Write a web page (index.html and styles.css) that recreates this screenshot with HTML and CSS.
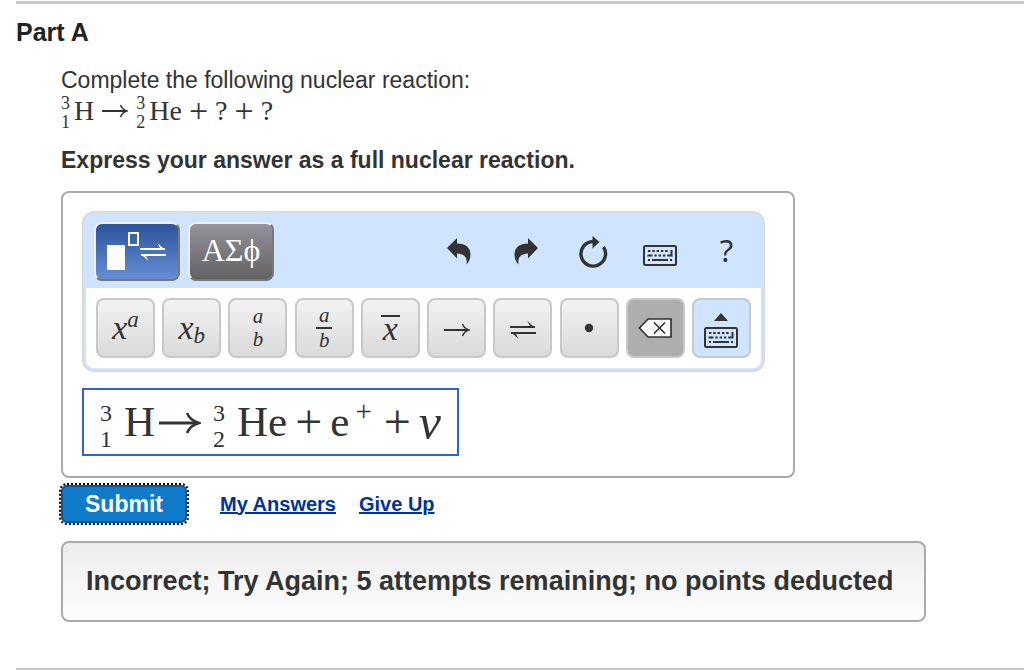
FILE: index.html
```html
<!DOCTYPE html>
<html lang="en">

<head>
  <meta charset="utf-8">
  <title>Part A</title>
  <link rel="stylesheet" href="styles.css">
</head>

<body>
  <svg class="defs" aria-hidden="true">
    <symbol id="keyboard" viewBox="0 0 34 21">
      <rect x="1" y="1" width="32" height="19" rx="1.5" fill="none" stroke="currentColor" stroke-width="2" />
      <path d="M5 6h21M7 10.500h18" stroke="currentColor" stroke-width="2" stroke-dasharray="2.4 1.9" />
      <path d="M5 15h2M9 15h16M27 15h2M4.500 10.500h3M25 10.500h3.500V5" fill="none" stroke="currentColor" stroke-width="2" />
    </symbol>
    <symbol id="equilibrium" viewBox="0 0 26 18">
      <path d="M0 6h25M1 12h25" stroke="currentColor" stroke-width="2" />
      <path d="M17.500 0l7.500 7h-4zM8.500 18l-7.500-7h4z" fill="currentColor" />
    </symbol>
    <symbol id="arrow" viewBox="0 0 26 14">
      <path d="M0 7h24" stroke="currentColor" stroke-width="2" />
      <path d="M18.500 1q1.500 4.500 6.500 6q-5 1.500-6.500 6" fill="none" stroke="currentColor" stroke-width="1.500" />
    </symbol>
    <symbol id="undo" viewBox="0 0 24 27">
      <path d="M0 10L10 0v5.500c9 0 13.500 4.500 13.500 11c0 4-1.500 7.500-4 10c1-7-2-10.500-9.500-11v5z" fill="currentColor" />
    </symbol>
  </svg>

  <main class="part">
    <h1>Part A</h1>
    <div class="content">
      <p class="question">Complete the following nuclear reaction:</p>
      <div class="equation">
        <span class="scripts"><span>3</span><span>1</span></span>
        <span>H</span>
        <svg class="arrow"><use href="#arrow" /></svg>
        <span class="scripts"><span>3</span><span>2</span></span>
        <span>He</span>
        <span class="op">+</span>
        <span>?</span>
        <span class="op">+</span>
        <span>?</span>
      </div>
      <p class="instructions">Express your answer as a full nuclear reaction.</p>

      <form>
        <div class="editor">
          <div class="toolbar">
            <div class="toolbar-top">
              <div class="tabs">
                <button type="button" class="tab active" aria-label="Templates">
                  <svg width="60" height="40" viewBox="0 0 60 40">
                    <path d="M0 14h18v25H0z" fill="#fff" />
                    <path d="M22 2h9v12h-9z" fill="none" stroke="#fff" stroke-width="2" />
                    <use href="#equilibrium" x="33" y="12" width="26" height="18" />
                  </svg>
                </button>
                <button type="button" class="tab">ΑΣϕ</button>
              </div>
              <div class="tools">
                <button type="button" class="tool" aria-label="Undo"><svg width="24" height="27"><use href="#undo" /></svg></button>
                <button type="button" class="tool" aria-label="Redo"><svg class="flip" width="24" height="27"><use href="#undo" /></svg></button>
                <button type="button" class="tool" aria-label="Reset">
                  <svg width="30" height="34" viewBox="0 0 30 34">
                    <path d="M15 6.500A12.300 12.300 0 1 0 25.500 12" fill="none" stroke="currentColor" stroke-width="3.400" />
                    <path d="M14.500 1l7 6l-7 6.500z" fill="currentColor" />
                  </svg>
                </button>
                <button type="button" class="tool low" aria-label="Keyboard shortcuts"><svg width="34" height="21"><use href="#keyboard" /></svg></button>
                <button type="button" class="tool help">?</button>
              </div>
            </div>
            <div class="keys">
              <button type="button" class="key"><i>x</i><i class="sup">a</i></button>
              <button type="button" class="key"><i>x</i><i class="sub">b</i></button>
              <button type="button" class="key stack"><i>a</i><i>b</i></button>
              <button type="button" class="key stack fraction"><i>a</i><i>b</i></button>
              <button type="button" class="key"><i class="bar">x</i></button>
              <button type="button" class="key symbol" aria-label="Arrow"><svg width="26" height="14"><use href="#arrow" /></svg></button>
              <button type="button" class="key symbol" aria-label="Equilibrium"><svg width="26" height="18"><use href="#equilibrium" /></svg></button>
              <button type="button" class="key" aria-label="Dot"><svg width="10" height="10"><circle cx="5" cy="5" r="4.200" fill="currentColor" /></svg></button>
              <button type="button" class="key delete" aria-label="Delete">
                <svg width="34" height="20" viewBox="0 0 34 20">
                  <path d="M1.500 10L10 1h23v18H10z" fill="#fff" stroke="currentColor" stroke-width="1.700" />
                  <path d="M16 4.500l11 11M27 4.500l-11 11" stroke="currentColor" stroke-width="1.700" />
                </svg>
              </button>
              <button type="button" class="key toggle" aria-label="Toggle keyboard">
                <svg width="14" height="8"><path d="M0 8L7 0l7 8z" fill="currentColor" /></svg>
                <svg width="34" height="21"><use href="#keyboard" /></svg>
              </button>
            </div>
          </div>

          <div class="answer" role="textbox" contenteditable="true" aria-label="Answer" spellcheck="false">
            <span class="scripts"><span>3</span><span>1</span></span>
            <span>H</span>
            <svg class="long-arrow" width="42" height="24" viewBox="0 0 42 24">
              <path d="M0 13h39" stroke="currentColor" stroke-width="3" />
              <path d="M28 3q3 7.500 12 10q-9 2.500-12 10" fill="none" stroke="currentColor" stroke-width="2.500" />
            </svg>
            <span class="scripts"><span>3</span><span>2</span></span>
            <span>He</span>
            <span class="op">+</span>
            <span class="electron">e<sup>+</sup></span>
            <span class="op">+</span>
            <i class="nu">ν</i>
          </div>
        </div>

        <div class="actions">
          <button type="submit" class="submit">Submit</button>
          <a href="#">My Answers</a>
          <a href="#">Give Up</a>
        </div>
      </form>

      <div class="feedback">Incorrect; Try Again; 5 attempts remaining; no points deducted</div>
    </div>
  </main>
</body>

</html>
```

FILE: styles.css
```css
* {
  box-sizing: border-box;
}

body {
  margin: 0;
  font-family: "Liberation Sans", Arial, sans-serif;
  color: #333;
  background-color: #fff;
}

button {
  padding: 0;
  font-family: inherit;
  color: inherit;
  cursor: pointer;
}

svg {
  display: block;
  flex: none;
}

.defs {
  display: none;
}

.part {
  margin: 1px 0 0 16px;
  border-top: 3px solid #c8c9c9;
  border-bottom: 2px solid #c8c9c9;
  padding-bottom: 46px;
}

h1 {
  margin: 14px 0 0;
  font-size: 25px;
  line-height: 28px;
  color: #222;
}

.content {
  margin-left: 45px;
}

.question {
  margin: 21px 0 0;
  font-size: 23px;
  line-height: 26px;
}

.equation {
  display: flex;
  align-items: center;
  height: 36px;
  font-family: "Liberation Serif", "Times New Roman", serif;
  font-size: 28px;
  line-height: 34px;
}

.scripts {
  display: flex;
  flex-direction: column;
}

.equation .scripts {
  margin-right: 4px;
  padding-top: 4px;
  font-size: 18px;
  line-height: 19px;
}

.equation .arrow {
  width: 26px;
  height: 14px;
  margin: 0 8px;
}

.equation .op {
  margin: 0 7px;
  font-size: 34px;
}

.instructions {
  margin: 18px 0;
  font-size: 23px;
  font-weight: bold;
  line-height: 26px;
}

.editor {
  max-width: 734px;
  padding: 18px 28px 20px 19px;
  border: 2px solid #aaa;
  border-radius: 8px;
}

.toolbar {
  padding: 0 2px 2px;
  border: 2px solid #dadada;
  border-radius: 12px;
  background-color: #cfe5ff;
}

.toolbar-top {
  display: flex;
  justify-content: space-between;
  padding: 9px 17px 7px 8px;
}

.tabs {
  display: flex;
  gap: 8px;
}

.tab {
  display: flex;
  align-items: center;
  justify-content: center;
  width: 86px;
  height: 59px;
  padding-bottom: 2px;
  border: 2px solid;
  border-color: #eee #777 #777 #eee;
  border-radius: 8px;
  background: linear-gradient(#94929c, #626262);
  font-family: "Liberation Serif", "Times New Roman", serif;
  font-size: 32px;
  color: #fff;
}

.tab.active {
  background: linear-gradient(#2c549c, #658dd3);
}

.tools {
  display: flex;
  align-items: center;
  gap: 32px;
}

.tool {
  display: flex;
  align-items: center;
  justify-content: center;
  width: 35px;
  height: 40px;
  border: 0;
  background: none;
}

.tool.low {
  align-items: flex-end;
  padding-bottom: 6px;
}

.flip {
  transform: scaleX(-1);
}

.tool.help {
  padding-bottom: 4px;
  font-family: "Noto Sans", sans-serif;
  font-size: 31px;
}

.keys {
  display: flex;
  justify-content: space-between;
  padding: 10px;
  border-radius: 0 0 8px 8px;
  background-color: #fff;
}

.key {
  display: flex;
  align-items: center;
  justify-content: center;
  width: 59px;
  height: 60px;
  border: 2px solid #c8c8c8;
  border-radius: 8px;
  background: linear-gradient(#f2f2f2, #dadada);
  font-family: "Liberation Serif", "Times New Roman", serif;
  font-size: 34px;
}

.sup,
.sub {
  font-size: 23px;
}

.sup {
  padding-bottom: 16px;
}

.sub {
  padding-top: 16px;
}

.stack {
  flex-direction: column;
  font-size: 21px;
  line-height: 23px;
}

.fraction i:first-child {
  padding: 0 3px;
  border-bottom: 2px solid #333;
}

.bar {
  padding: 0 2px;
  border-top: 2px solid #333;
  line-height: 24px;
}

.symbol {
  padding-top: 4px;
}

.delete {
  background: #aeaeae;
}

.toggle {
  flex-direction: column;
  gap: 6px;
  padding-top: 4px;
  background: #cfe5ff;
}

.answer {
  display: flex;
  align-items: center;
  width: fit-content;
  height: 68px;
  margin-top: 16px;
  padding: 0 16px;
  border: 2px solid #3163c9;
  font-family: "Liberation Serif", "Times New Roman", serif;
  font-size: 43px;
  line-height: 60px;
}

.answer .scripts {
  margin-right: 12px;
  padding-top: 8px;
  font-size: 24px;
  line-height: 26px;
}

.long-arrow {
  margin: 0 12px 0 4px;
}

.answer .op {
  margin: 0 8px;
  font-size: 48px;
}

.answer sup {
  margin-left: 6px;
  font-size: 29px;
  line-height: 0;
}

.electron {
  margin-right: 4px;
}

.nu {
  font-size: 50px;
}

.actions {
  display: flex;
  align-items: center;
  margin-top: 7px;
  font-size: 20px;
  font-weight: bold;
}

.submit {
  width: 126px;
  height: 38px;
  margin-right: 33px;
  border: 2px solid #0a5797;
  border-radius: 6px;
  outline: 2px dotted #000;
  background-color: #107acb;
  font-size: 23px;
  font-weight: bold;
  color: #fff;
}

.actions a {
  margin-right: 23px;
  color: #039;
}

.feedback {
  width: fit-content;
  margin-top: 18px;
  padding: 22px 30px 22px 23px;
  border: 2px solid #aaa;
  border-radius: 8px;
  background: linear-gradient(#ececec, #fff);
  font-size: 27px;
  font-weight: bold;
  line-height: 33px;
}
```
